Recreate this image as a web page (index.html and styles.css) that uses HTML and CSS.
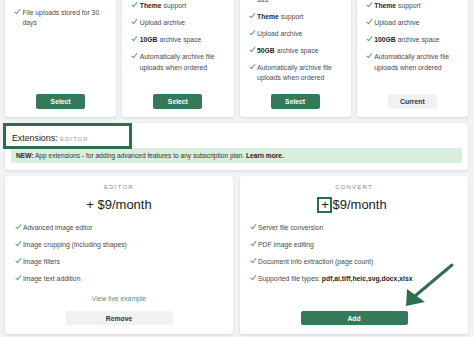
FILE: index.html
```html
<!DOCTYPE html>
<html lang="en">
<head>
<meta charset="utf-8">
<title>Plans</title>
<link rel="stylesheet" href="styles.css">
</head>
<body>
<main class="page">
  <section class="plans">
    <article class="plan plan--free">
      <ul class="features">
        <li>Email support</li>
        <li>File uploads stored for 30 days</li>
      </ul>
      <button class="btn btn--primary">Select</button>
    </article>
    <article class="plan">
      <ul class="features">
        <li>File uploads up to 1GB</li>
        <li><strong>Theme</strong> support</li>
        <li>Upload archive</li>
        <li><strong>10GB</strong> archive space</li>
        <li>Automatically archive file uploads when ordered</li>
      </ul>
      <button class="btn btn--primary">Select</button>
    </article>
    <article class="plan">
      <ul class="features">
        <li>File uploads up to 5GB in size</li>
        <li><strong>Theme</strong> support</li>
        <li>Upload archive</li>
        <li><strong>50GB</strong> archive space</li>
        <li>Automatically archive file uploads when ordered</li>
      </ul>
      <button class="btn btn--primary">Select</button>
    </article>
    <article class="plan">
      <ul class="features">
        <li>File uploads up to 10GB</li>
        <li><strong>Theme</strong> support</li>
        <li>Upload archive</li>
        <li><strong>100GB</strong> archive space</li>
        <li>Automatically archive file uploads when ordered</li>
      </ul>
      <button class="btn btn--muted">Current</button>
    </article>
  </section>

  <section class="extensions">
    <h2 class="ext-title">Extensions: <span class="ext-tag">EDITOR</span></h2>
    <p class="banner"><strong>NEW:</strong> App extensions - for adding advanced features to any subscription plan. <strong>Learn more.</strong></p>
  </section>

  <section class="addons">
    <article class="addon">
      <p class="addon-name">EDITOR</p>
      <p class="addon-price"><span class="sign">+</span> $9/month</p>
      <ul class="features">
        <li>Advanced image editor</li>
        <li>Image cropping (including shapes)</li>
        <li>Image filters</li>
        <li>Image text addition</li>
      </ul>
      <a class="addon-link" href="#">View live example</a>
      <button class="btn btn--muted btn--wide">Remove</button>
    </article>
    <article class="addon addon--convert">
      <p class="addon-name">CONVERT</p>
      <p class="addon-price"><span class="sign sign--marked">+</span> $9/month</p>
      <ul class="features">
        <li>Server file conversion</li>
        <li>PDF image editing</li>
        <li>Document info extraction (page count)</li>
        <li>Supported file types: <strong>pdf,ai,tiff,heic,svg,docx,xlsx</strong></li>
      </ul>
      <button class="btn btn--primary btn--wide">Add</button>
      <svg class="pointer" width="60" height="50" viewBox="0 0 60 50" aria-hidden="true">
        <line x1="52" y1="4" x2="15" y2="35" stroke="#2f6f51" stroke-width="3" stroke-linecap="round"/>
        <polygon points="6,45 7,28 25,41" fill="#2f6f51"/>
      </svg>
    </article>
  </section>
</main>
</body>
</html>
```

FILE: styles.css
```css
*,
*::before,
*::after {
  box-sizing: border-box;
  margin: 0;
  padding: 0;
}

html,
body {
  background: #f2f3f5;
}

body {
  font-family: "Liberation Sans", Arial, Helvetica, sans-serif;
  font-size: 6.8px;
  color: #464b51;
  height: 337px;
  overflow: hidden;
}

.page {
  padding: 0 6px 0 5px;
  display: flex;
  flex-direction: column;
  gap: 6px;
}

/* ---------- plan cards ---------- */
.plans {
  display: grid;
  grid-template-columns: repeat(4, 1fr);
  gap: 6px;
  margin-top: -24px;
}

.plan {
  background: #fff;
  border-radius: 3px;
  box-shadow: 0 1px 3px rgba(0, 0, 0, 0.12);
  padding: 8px 10.5px 8px;
  display: flex;
  flex-direction: column;
}

.plan--free {
  padding-top: 14.7px;
}

.plan .features {
  margin-bottom: 10px;
}

.plan .btn {
  margin-top: auto;
}

/* ---------- feature lists ---------- */
.features {
  list-style: none;
  display: flex;
  flex-direction: column;
  gap: 6.5px;
  line-height: 10.5px;
}

.features li {
  padding-left: 7px;
}

.features li::before {
  content: "";
  display: inline-block;
  width: 3.2px;
  height: 5.6px;
  border: solid #5b9e73;
  border-width: 0 1px 1px 0;
  transform: rotate(40deg);
  margin-left: -6.5px;
  margin-right: 3.3px;
  vertical-align: 1px;
}

.features strong {
  color: #232527;
  font-weight: 700;
}

/* ---------- buttons ---------- */
.btn {
  font: inherit;
  font-size: 6.8px;
  font-weight: 700;
  border: 0;
  border-radius: 2px;
  width: 49px;
  height: 15px;
  align-self: center;
}

.btn--primary {
  background: #347a5a;
  color: #fff;
}

.btn--muted {
  background: #f0f1f3;
  color: #333;
}

.btn--wide {
  width: 107px;
  height: 14px;
}

/* ---------- extensions ---------- */
.extensions {
  position: relative;
  background: #fff;
  border-radius: 3px;
  box-shadow: 0 1px 3px rgba(0, 0, 0, 0.12);
  padding: 9px 6px 7px;
}

.ext-title {
  font-size: 8.8px;
  font-weight: 400;
  line-height: 12px;
  padding-left: 1px;
  margin-bottom: 3.5px;
  color: #222;
}

.ext-title::after {
  content: "";
  position: absolute;
  left: -2px;
  top: 0.5px;
  width: 129px;
  height: 26px;
  border: 3px solid #2e6c4e;
}

.ext-tag {
  font-size: 6px;
  letter-spacing: 1px;
  color: #9a9a9a;
}

.banner {
  background: #d9eedd;
  border-radius: 2px;
  height: 15px;
  line-height: 15px;
  padding-left: 5px;
  font-size: 6.6px;
  color: #333;
}

.banner strong {
  color: #222;
}

/* ---------- add-ons ---------- */
.addons {
  display: grid;
  grid-template-columns: 1fr 1fr;
  gap: 7px;
}

.addon {
  position: relative;
  background: #fff;
  border-radius: 3px;
  box-shadow: 0 1px 3px rgba(0, 0, 0, 0.12);
  padding: 7px 11px 9px;
  display: flex;
  flex-direction: column;
}

.addon-name {
  text-align: center;
  font-size: 6px;
  letter-spacing: 1.2px;
  line-height: 8px;
  color: #8a8a8a;
}

.addon-price {
  text-align: center;
  font-size: 13px;
  line-height: 16px;
  margin-top: 6.3px;
  color: #222;
}

.addon .features {
  margin-top: 9.5px;
}

.addon-link {
  align-self: center;
  margin-top: 9.5px;
  margin-bottom: 7px;
  line-height: 10.5px;
  color: #5f8f74;
  text-decoration: none;
}

.addon .btn {
  margin-top: auto;
}

.sign--marked {
  position: relative;
}

.sign--marked::after {
  content: "";
  position: absolute;
  left: -4.5px;
  right: -3.5px;
  top: -0.5px;
  bottom: -0.5px;
  border: 2.5px solid #2e6c4e;
}

.pointer {
  position: absolute;
  left: 160px;
  top: 85px;
}
```
